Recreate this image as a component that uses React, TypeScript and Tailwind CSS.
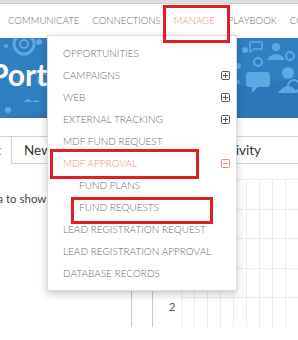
import { Fragment } from "react";

type MenuItem = {
  label: string;
  icon?: "plus" | "minus";
  active?: boolean;
  sub?: boolean;
};

const menu: MenuItem[] = [
  { label: "OPPORTUNITIES" },
  { label: "CAMPAIGNS", icon: "plus" },
  { label: "WEB", icon: "plus" },
  { label: "EXTERNAL TRACKING", icon: "plus" },
  { label: "MDF FUND REQUEST" },
  { label: "MDF APPROVAL", icon: "minus", active: true },
  { label: "FUND PLANS", sub: true },
  { label: "FUND REQUESTS", sub: true },
  { label: "LEAD REGISTRATION REQUEST" },
  { label: "LEAD REGISTRATION APPROVAL" },
  { label: "DATABASE RECORDS" },
];

const nav = ["COMMUNICATE", "CONNECTIONS", "MANAGE", "PLAYBOOK", "CONTENT"];

function BoxIcon({ kind }: { kind: "plus" | "minus" }) {
  const color = kind === "plus" ? "#555" : "#f08a7a";
  return (
    <svg width="9" height="9" viewBox="0 0 9 9">
      <rect x="0.5" y="0.5" width="8" height="8" rx="1" fill="none" stroke={color} />
      <line x1="2" y1="4.5" x2="7" y2="4.5" stroke={color} />
      {kind === "plus" && <line x1="4.5" y1="2" x2="4.5" y2="7" stroke={color} />}
    </svg>
  );
}

// pattern of social icons on the banner
function BannerPattern() {
  const c = "#5ca8e2";
  return (
    <svg className="absolute inset-0" width="298" height="80" viewBox="0 0 298 80">
      <path d="M0 80 L298 40 L298 80 Z" fill="#2a70b0" opacity="0.5" />
      <circle cx="24" cy="6" r="10" fill="none" stroke={c} strokeWidth="3" />
      <circle cx="24" cy="6" r="4" fill="none" stroke={c} strokeWidth="2" />
      <circle cx="39" cy="4" r="3" fill={c} />
      <circle cx="6" cy="8" r="2" fill={c} />
      <circle cx="44" cy="42" r="6" fill="none" stroke={c} strokeWidth="1.5" />
      <path d="M24 64 q4 -6 8 0 q4 -4 8 0 z" fill={c} />
      <circle cx="8" cy="72" r="3" fill={c} />
      <path d="M250 4 h12 v7 h-8 l-4 3 z" fill="none" stroke={c} strokeWidth="1.5" />
      <circle cx="245" cy="12" r="3" fill={c} />
      <circle cx="276" cy="9" r="4" fill={c} />
      <path d="M268 20 q8 -8 16 0 v2 h-16 z" fill={c} />
      <circle cx="258" cy="24" r="4" fill="none" stroke={c} strokeWidth="2" />
      <circle cx="290" cy="18" r="4" fill="none" stroke={c} strokeWidth="2" />
      <circle cx="238" cy="28" r="3" fill={c} />
      <rect x="246" y="34" width="24" height="15" rx="3" fill={c} />
      <path d="M252 49 l0 6 l6 -6 z" fill={c} />
      <circle cx="288" cy="35" r="6" fill={c} />
      <path d="M278 55 q10 -14 20 0 z" fill={c} />
      <circle cx="294" cy="48" r="6" fill="none" stroke={c} strokeWidth="2" />
      <circle cx="238" cy="44" r="2" fill={c} />
    </svg>
  );
}

export default function App() {
  return (
    <div className="relative w-[298px] h-[340px] overflow-hidden bg-white font-['Lato',sans-serif]">
      <div className="h-[4px] bg-[#dedede] border-b border-[#cfcfcf]" />

      {/* top navigation */}
      <div className="h-[34px] flex items-center gap-[13px] pl-[8px] whitespace-nowrap text-[9.6px] font-light text-[#6b6b6b]">
        {nav.map((n) => (
          <span key={n} className={n === "MANAGE" ? "text-[#f08a7a]" : ""}>
            {n}
          </span>
        ))}
      </div>

      {/* banner */}
      <div className="relative h-[80px] bg-[#2f7fc3] overflow-hidden">
        <BannerPattern />
        <div className="relative pt-[21px] -ml-[10px] text-[30px] leading-[30px] font-bold text-white whitespace-nowrap">
          Portal
        </div>
      </div>

      <div className="h-[18px]" />

      {/* tabs */}
      <div className="flex h-[28px] border-t border-[#d4d4d4] text-[13.5px] text-[#333] whitespace-nowrap">
        <div className="w-[12px] overflow-hidden flex items-center justify-end pr-[10px] border-r border-[#d4d4d4]">
          <span className="text-[#4a8fc7]">Chart</span>
        </div>
        <div className="flex-1 flex items-center border-b border-[#d4d4d4] pl-[12px]">
          <span>New Leads</span>
          <span className="ml-auto mr-[37px]">Activity</span>
        </div>
      </div>

      {/* content */}
      <div className="flex h-[176px]">
        <div className="w-[134px] overflow-hidden pt-[26px] text-[11.5px] text-[#444] whitespace-nowrap">
          <span className="-ml-[37px] inline-block">No data to show</span>
        </div>
        <div className="w-[21px] border-l border-[#c8c8c8] h-[163px]" />
        <div className="flex-1 flex border-l border-[#c8c8c8] h-[163px]">
          <div className="w-[28px] pt-[136px] pl-[16px] text-[11px] leading-[14px] text-[#555]">2</div>
          <div className="flex-1 flex flex-col pt-[15px]">
            {[0, 1, 2, 3, 4].map((r) => (
              <div key={r} className="flex h-[32px] border-t border-[#ececec]">
                {Array.from({ length: 9 }).map((_, k) => (
                  <div key={k} className="w-[13px] shrink-0 border-l border-[#ececec]" />
                ))}
              </div>
            ))}
          </div>
        </div>
      </div>

      {/* dropdown */}
      <div className="absolute left-[47px] top-[35px] w-[190px] bg-white border border-[#dcdcdc] shadow-[0_3px_8px_rgba(0,0,0,0.22)] pt-[6px] pb-[6px] text-[10px] font-light text-[#6b6b6b]">
        {menu.map((m) => (
          <Fragment key={m.label}>
            <div
              className={
                "h-[22px] flex items-center pr-[6px] whitespace-nowrap " +
                (m.sub ? "pl-[31px] " : "pl-[15px] ") +
                (m.active ? "text-[#f08a7a]" : "")
              }
            >
              <span>{m.label}</span>
              {m.icon && (
                <span className="ml-auto flex">
                  <BoxIcon kind={m.icon} />
                </span>
              )}
            </div>
          </Fragment>
        ))}
      </div>

      {/* annotation boxes */}
      <div className="absolute left-[163px] top-[5px] w-[67px] h-[38px] border-[3px] border-[#e51d25]" />
      <div className="absolute left-[50px] top-[149px] w-[149px] h-[30px] border-[3px] border-[#e51d25]" />
      <div className="absolute left-[71px] top-[197px] w-[142px] h-[27px] border-[3px] border-[#e51d25]" />
    </div>
  );
}
